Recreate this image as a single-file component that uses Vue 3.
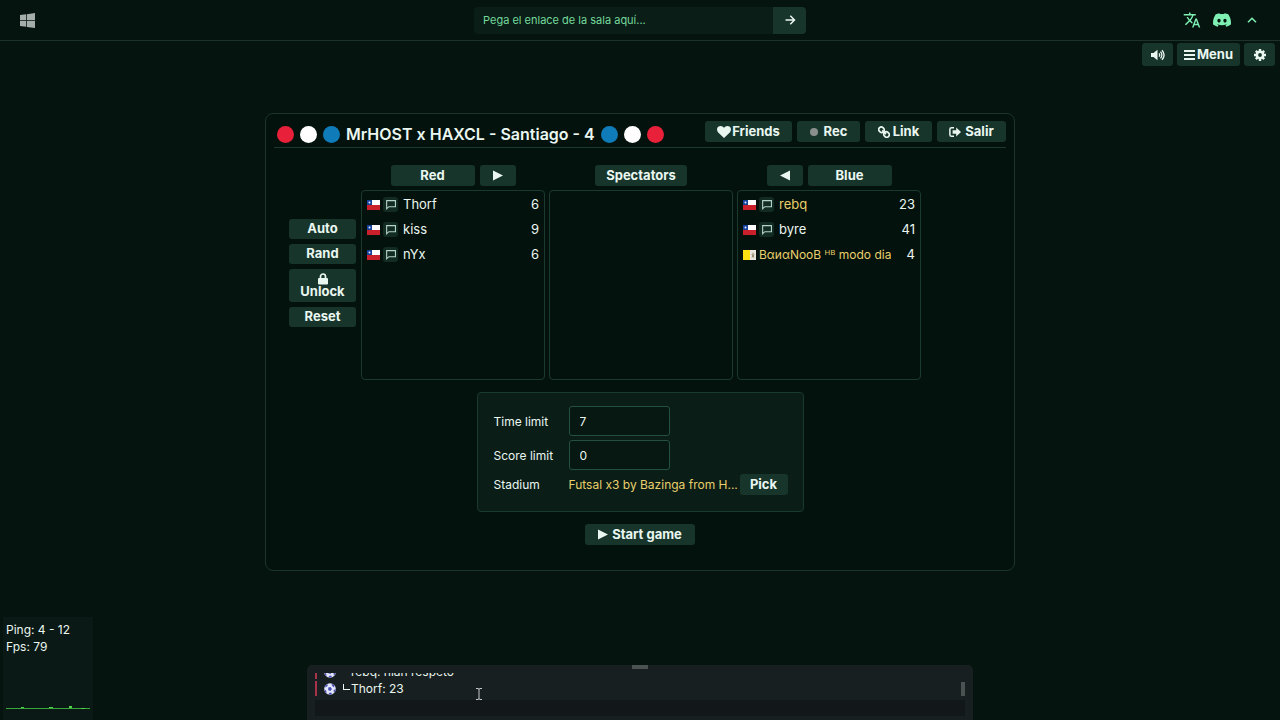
<script setup>
import { ref } from 'vue'

const roomUrl = ref('')
const timeLimit = ref('7')
const scoreLimit = ref('0')
const message = ref('')

const leftDots = ['red', 'white', 'blue']
const rightDots = ['blue', 'white', 'red']

const redTeam = [
  { name: 'Thorf', ping: 6 },
  { name: 'kiss', ping: 9 },
  { name: 'nYx', ping: 6 },
]
const blueTeam = [
  { name: 'rebq', ping: 23, admin: true },
  { name: 'byre', ping: 41 },
  { name: 'BαиαNooB ᴴᴮ modo dia', ping: 4, admin: true, vatican: true },
]
const teams = [
  { id: 'red', label: 'Red', players: redTeam },
  { id: 'spec', label: 'Spectators', players: [] },
  { id: 'blue', label: 'Blue', players: blueTeam },
]
const log = ['rebq: hian respeto', 'Thorf: 23']
</script>

<template>
  <div class="page">
    <header class="topbar">
      <div class="side">
        <svg class="windows" viewBox="0 0 16 16" aria-label="Windows">
          <path d="M0 2.2 6.6 1.3V7.6H0zM7.4 1.2 16 0V7.6H7.4zM0 8.4H6.6V14.7L0 13.8zM7.4 8.4H16V16L7.4 14.8z" />
        </svg>
      </div>
      <form class="join" @submit.prevent>
        <input v-model="roomUrl" type="text" aria-label="Enlace de la sala" placeholder="Pega el enlace de la sala aquí..." />
        <button type="submit" aria-label="Entrar">
          <svg class="ic12" viewBox="0 0 12 12"><path d="M1.5 6h9M6.3 1.8 10.5 6 6.3 10.2" fill="none" stroke="currentColor" stroke-width="1.5" /></svg>
        </button>
      </form>
      <nav class="side end">
        <button class="plain" type="button" aria-label="Idioma">
          <svg class="ic18" viewBox="0 0 24 24"><path fill="currentColor" d="m12.87 15.07-2.54-2.51.03-.03A17.52 17.52 0 0 0 14.07 6H17V4h-7V2H8v2H1v1.99h11.17C11.5 7.92 10.44 9.75 9 11.35 8.07 10.32 7.3 9.19 6.69 8h-2c.73 1.63 1.73 3.17 2.98 4.56l-5.09 5.02L4 19l5-5 3.11 3.11.76-2.04zM18.5 10h-2L12 22h2l1.12-3h4.75L21 22h2l-4.5-12zm-2.62 7 1.62-4.33L19.12 17h-3.24z" /></svg>
        </button>
        <button class="plain" type="button" aria-label="Discord">
          <svg class="ic18" viewBox="0 0 16 16"><path fill="currentColor" d="M13.545 2.907a13.2 13.2 0 0 0-3.257-1.011.05.05 0 0 0-.052.025c-.141.25-.297.577-.406.833a12.2 12.2 0 0 0-3.658 0 8 8 0 0 0-.412-.833.05.05 0 0 0-.052-.025c-1.125.194-2.22.534-3.257 1.011a.04.04 0 0 0-.021.018C.356 6.024-.213 9.047.066 12.032q.003.022.021.037a13.3 13.3 0 0 0 3.995 2.02.05.05 0 0 0 .056-.019q.463-.63.818-1.329a.05.05 0 0 0-.01-.059l-.018-.011a9 9 0 0 1-1.248-.595.05.05 0 0 1-.02-.066l.015-.019q.127-.095.248-.195a.05.05 0 0 1 .051-.007c2.619 1.196 5.454 1.196 8.041 0a.05.05 0 0 1 .053.007q.121.1.248.195a.05.05 0 0 1-.004.085 8 8 0 0 1-1.249.594.05.05 0 0 0-.03.03.05.05 0 0 0 .003.041c.24.465.515.909.817 1.329a.05.05 0 0 0 .056.019 13.2 13.2 0 0 0 4.001-2.02.05.05 0 0 0 .021-.037c.334-3.451-.559-6.449-2.366-9.106a.03.03 0 0 0-.02-.019m-8.198 7.307c-.789 0-1.438-.724-1.438-1.612s.637-1.613 1.438-1.613c.807 0 1.45.73 1.438 1.613 0 .888-.637 1.612-1.438 1.612m5.316 0c-.788 0-1.438-.724-1.438-1.612s.637-1.613 1.438-1.613c.807 0 1.451.73 1.438 1.613 0 .888-.631 1.612-1.438 1.612" /></svg>
        </button>
        <button class="plain" type="button" aria-label="Ocultar">
          <svg class="ic12" viewBox="0 0 12 12"><path d="M2 8.3 6 4.2l4 4.1" fill="none" stroke="currentColor" stroke-width="1.5" /></svg>
        </button>
      </nav>
    </header>

    <div class="toolbar">
      <button class="btn tall sound" type="button" aria-label="Sonido">
        <svg class="sound-ic" viewBox="0 0 14 12">
          <path fill="currentColor" d="M0 4h2.5L6.5.8v10.4L2.500 8H0z" />
          <path d="M8 4.300q1.400 1.700 0 3.400M9.500 2.700q2.800 3.300 0 6.600M11 1.200q4.200 4.800 0 9.600" fill="none" stroke="currentColor" stroke-width="1.300" />
        </svg>
      </button>
      <button class="btn tall menu" type="button">
        <svg class="bars" viewBox="0 0 11 12"><path fill="currentColor" d="M0 1h11v2H0zM0 5h11v2H0zM0 9h11v2H0z" /></svg>Menu
      </button>
      <button class="btn tall gear" type="button" aria-label="Ajustes">
        <svg class="ic12" viewBox="0 0 12 12">
          <path d="M6 0v12M0 6h12M1.800 1.800l8.400 8.400M10.200 1.800l-8.400 8.400" stroke="currentColor" stroke-width="2.400" />
          <circle cx="6" cy="6" r="3.200" fill="none" stroke="currentColor" stroke-width="2.400" />
          <circle cx="6" cy="6" r="1.900" fill="#17352b" />
        </svg>
      </button>
    </div>

    <main>
      <section class="room">
        <div class="room-head">
          <h1>
            <i v-for="d in leftDots" :key="d" class="dot" :class="d"></i>
            <span>MrHOST x HAXCL - Santiago - 4</span>
            <i v-for="d in rightDots" :key="d" class="dot" :class="d"></i>
          </h1>
          <div class="actions">
            <button class="btn friends" type="button">
              <svg class="heart" viewBox="0 0 14 12"><path fill="currentColor" d="M7 12 1.200 6.400C-.6 4.500-.2 1.700 1.600.6 3.400-.5 5.800.1 7 2 8.200.1 10.600-.5 12.400.6c1.800 1.100 2.200 3.900.4 5.800z" /></svg>Friends
            </button>
            <button class="btn rec" type="button"><i class="rec-dot"></i>Rec</button>
            <button class="btn link" type="button">
              <svg class="ic12" viewBox="0 0 12 12"><g fill="none" stroke="currentColor" stroke-width="1.700"><rect x="1" y=".9" width="5" height="5.600" rx="2.300" transform="rotate(-45 3.500 3.700)" /><rect x="6" y="5.700" width="5" height="5.600" rx="2.300" transform="rotate(-45 8.500 8.500)" /><path d="m4.200 4.400 3.800 3.800" /></g></svg>Link
            </button>
            <button class="btn leave" type="button">
              <svg class="ic12" viewBox="0 0 12 12"><path d="M5 1.700H2.600Q.9 1.700.9 3.300v5.400q0 1.600 1.700 1.600H5" fill="none" stroke="currentColor" stroke-width="1.500" /><path fill="currentColor" d="M3.600 4.300h3.600V1.500L12 6 7.200 10.500V7.700H3.600z" /></svg>Salir
            </button>
          </div>
        </div>

        <div class="board">
          <div class="tools">
            <button class="btn" type="button">Auto</button>
            <button class="btn" type="button">Rand</button>
            <button class="btn unlock" type="button">
              <svg class="lock" viewBox="0 0 10 12"><path d="M2.500 6V3.500a2.500 2.500 0 0 1 5 0V6" fill="none" stroke="currentColor" stroke-width="1.700" /><rect x="0" y="5" width="10" height="6.500" rx="1" fill="currentColor" /></svg>
              Unlock
            </button>
            <button class="btn" type="button">Reset</button>
          </div>
          <div class="teams">
            <div v-for="t in teams" :key="t.id" class="team">
              <div class="team-head">
                <button v-if="t.id === 'blue'" class="btn arrow" type="button" aria-label="Mover a Blue">
                  <svg class="tri" viewBox="0 0 10 10"><path fill="currentColor" d="M10 0v10L0 5z" /></svg>
                </button>
                <button class="btn name" :class="t.id" type="button">{{ t.label }}</button>
                <button v-if="t.id === 'red'" class="btn arrow" type="button" aria-label="Mover a Red">
                  <svg class="tri" viewBox="0 0 10 10"><path fill="currentColor" d="M0 0v10l10-5z" /></svg>
                </button>
              </div>
              <ul>
                <li v-for="p in t.players" :key="p.name">
                  <svg v-if="p.vatican" class="flag" viewBox="0 0 13 10"><path fill="#ffe011" d="M0 0h7v10H0z" /><path fill="#e8e6df" d="M7 0h6v10H7z" /><path d="M10 2.500v5M8.700 4.200l2.400 3.200M11.200 4.200 8.800 7.400" stroke="#8d8364" stroke-width=".9" /></svg>
                  <svg v-else class="flag" viewBox="0 0 13 10"><path fill="#fff" d="M4 0h9v5H4z" /><path fill="#14419b" d="M0 0h5v5H0z" /><path fill="#c9202b" d="M0 5h13v5H0z" /><circle cx="2.500" cy="2.500" r="1" fill="#dfe8f7" /></svg>
                  <span v-if="!p.vatican" class="bubble">
                    <svg viewBox="0 0 10 10"><path d="M1.500 1.500h8v5.500H3.500L1.500 8.800z" fill="none" stroke="#b4d3c6" stroke-width="1" /></svg>
                  </span>
                  <span class="player" :class="{ admin: p.admin, wide: p.vatican }">{{ p.name }}</span>
                  <span class="ping">{{ p.ping }}</span>
                </li>
              </ul>
            </div>
          </div>
        </div>

        <div class="settings">
          <label for="time">Time limit</label>
          <input id="time" v-model="timeLimit" type="text" />
          <label for="score">Score limit</label>
          <input id="score" v-model="scoreLimit" type="text" />
          <span class="lab">Stadium</span>
          <div class="stadium">
            <span>Futsal x3 by Bazinga from H...</span>
            <button class="btn pick" type="button">Pick</button>
          </div>
        </div>

        <button class="btn start" type="button">
          <svg class="tri" viewBox="0 0 10 10"><path fill="currentColor" d="M0 0v10l10-5z" /></svg>Start game
        </button>
      </section>
    </main>

    <footer>
      <div class="stats">
        <p>Ping: 4 - 12</p>
        <p>Fps: 79</p>
        <svg viewBox="0 0 84 6" preserveAspectRatio="none"><path fill="#37a83a" d="M0 4h84v1H0z" /><path fill="#4fd14c" d="M15 3h3v1h-3zM43 3h4v1h-4zM63 2h3v2h-3zM75 4h4v1h-4z" /></svg>
      </div>
      <div class="chat">
        <i class="grip"></i>
        <div class="log-wrap">
          <div class="log">
            <p v-for="m in log" :key="m">
              <svg class="ball" viewBox="0 0 12 12"><circle cx="6" cy="6" r="5.800" fill="#e6e9fb" /><path fill="#4a50b4" d="M4.200 4.600 6.600 4 8 6 6.500 8 4.200 7.200zM1.200 2.600 4 1.200 3.400 3.200 1.400 4.600zM7.500.6l3 1.800-.5 2L8 2.800zM.4 6.600l1.800 1 .4 2.400-1.400-.8zM4.600 10l2.600-.6.8 1.800-2.600.5zM9.600 7.200l2-1.400-.3 2.400-1.500 1.400z" /></svg>
              <span class="corner"></span>{{ m }}
            </p>
          </div>
          <i class="thumb"></i>
        </div>
        <input v-model="message" type="text" aria-label="Mensaje" />
      </div>
    </footer>

    <svg class="cursor" viewBox="0 0 6 12"><path d="M0 .5h2l1 .7 1-.7h2M0 11.500h2l1-.7 1 .7h2M3 1v10" fill="none" stroke="#c4cac9" stroke-width="1" /></svg>
  </div>
</template>

<style>
body {
  background: #05140f;
}
</style>

<style scoped>
* {
  box-sizing: border-box;
}
.page {
  position: relative;
  display: flex;
  flex-direction: column;
  height: 100vh;
  overflow: hidden;
  background: #05140f;
  color: #eaf7f1;
  font-family: Inter, "Noto Sans", sans-serif;
  font-size: 13px;
  line-height: 17px;
}
button,
input {
  font: inherit;
  color: inherit;
  border: 0;
  margin: 0;
  outline: 0;
}
svg {
  display: block;
  flex: none;
}
p,
h1,
ul {
  margin: 0;
  padding: 0;
}
.ic12 {
  width: 12px;
  height: 12px;
}
.bars {
  width: 11px;
  height: 12px;
}
.ic18 {
  width: 18px;
  height: 18px;
}
.topbar {
  display: grid;
  grid-template-columns: 1fr 332px 1fr;
  align-items: center;
  height: 41px;
  border-bottom: 1px solid #1d3229;
}
.side {
  display: flex;
  align-items: center;
  padding: 0 20px;
}
.windows {
  width: 15px;
  height: 15px;
  fill: #a5adab;
}
.end {
  justify-content: flex-end;
  gap: 12px;
  padding-right: 19px;
}
.plain {
  display: grid;
  place-items: center;
  width: 18px;
  height: 18px;
  padding: 0;
  background: none;
  color: #7ff0b4;
}
.join {
  display: flex;
  height: 27px;
  border-radius: 4px;
  overflow: hidden;
  background: #0a1d17;
}
.join input {
  flex: 1;
  min-width: 0;
  padding: 0 9px;
  background: none;
  font-size: 11px;
}
.join input::placeholder {
  color: #74d99b;
  opacity: 1;
}
.join button {
  display: grid;
  place-items: center;
  width: 33px;
  padding: 0;
  background: #17352b;
}
.btn {
  display: flex;
  align-items: center;
  justify-content: center;
  height: 21px;
  padding: 0;
  border-radius: 3px;
  background: #17352b;
  font-size: 13px;
  font-weight: 700;
  line-height: 13px;
  white-space: nowrap;
}
.toolbar {
  display: flex;
  justify-content: flex-end;
  gap: 4px;
  padding: 2px 5px 0;
}
.tall {
  height: 23px;
}
.sound,
.gear {
  width: 31px;
}
.sound-ic {
  width: 14px;
  height: 12px;
}
.menu {
  width: 63px;
  gap: 2px;
}
main {
  display: flex;
  flex: 1;
  align-items: flex-start;
  justify-content: center;
  padding-top: 47px;
}
.room {
  display: flex;
  flex-direction: column;
  align-items: center;
  width: 750px;
  max-width: 100%;
  padding: 7px 8px 25px;
  border: 1px solid #1c352b;
  border-radius: 8px;
  background: #04120d;
}
.room-head {
  display: flex;
  justify-content: space-between;
  align-self: stretch;
  height: 27px;
  border-bottom: 1px solid #1b3a2e;
}
h1 {
  display: flex;
  align-items: center;
  gap: 6px;
  padding-left: 3px;
  font-size: 16px;
  font-weight: 600;
  line-height: 20px;
  white-space: nowrap;
}
.dot {
  width: 17px;
  height: 17px;
  border-radius: 50%;
}
.dot.red {
  background: #e8203a;
}
.dot.white {
  background: #fff;
}
.dot.blue {
  background: #0f7bb8;
}
.actions {
  display: flex;
  gap: 5px;
}
.friends {
  width: 87px;
  gap: 1px;
}
.heart {
  width: 14px;
  height: 12px;
}
.rec {
  width: 63px;
  gap: 6px;
}
.rec-dot {
  width: 8px;
  height: 8px;
  border-radius: 50%;
  background: #8a8f8d;
}
.link {
  width: 67px;
  gap: 3px;
}
.leave {
  width: 69px;
  gap: 4px;
}
.board {
  display: grid;
  grid-template-columns: 1fr auto 1fr;
  align-items: center;
  align-self: stretch;
  column-gap: 5px;
  padding: 17px 0 0 2px;
}
.tools {
  display: grid;
  justify-self: end;
  width: 67px;
  gap: 5px;
}
.tools .btn {
  height: 20px;
}
.tools .unlock {
  flex-direction: column;
  height: 33px;
}
.lock {
  width: 10px;
  height: 12px;
}
.teams {
  display: flex;
  gap: 4px;
}
.team {
  width: 184px;
}
.team-head {
  display: flex;
  justify-content: center;
  gap: 5px;
  margin-bottom: 4px;
}
.name {
  width: 84px;
}
.name.spec {
  width: 92px;
}
.arrow {
  width: 36px;
}
.tri {
  width: 10px;
  height: 11px;
}
ul {
  height: 190px;
  padding: 1px 5px;
  border: 1px solid #1b3a2e;
  border-radius: 4px;
  list-style: none;
}
li {
  display: flex;
  align-items: center;
  height: 25px;
}
.flag {
  width: 13px;
  height: 10px;
}
.bubble {
  display: grid;
  place-items: center;
  width: 15px;
  height: 15px;
  margin: 0 5px 0 3px;
  border-radius: 3px;
  background: #122b23;
}
.bubble svg {
  width: 11px;
  height: 11px;
}
.player {
  flex: 1;
  min-width: 0;
  margin-right: 8px;
  overflow: hidden;
  white-space: nowrap;
}
.wide {
  margin-left: 3px;
  font-size: 12px;
}
.admin {
  color: #e9cf6c;
}
.ping {
  min-width: 16px;
  text-align: right;
}
.settings {
  display: grid;
  grid-template-columns: 75px minmax(0, 1fr);
  align-items: center;
  row-gap: 4px;
  width: 327px;
  margin-top: 12px;
  padding: 13px 15px 16px 16px;
  border: 1px solid #1b3a2e;
  border-radius: 4px;
  background: #0a1d17;
  font-size: 12px;
}
.settings input {
  width: 101px;
  height: 30px;
  padding: 0 10px;
  border: 1px solid #24503f;
  border-radius: 3px;
  background: #071812;
}
.stadium {
  display: flex;
  align-items: center;
  justify-content: space-between;
}
.stadium span {
  white-space: nowrap;
  color: #e9cf6c;
}
.pick {
  width: 48px;
}
.start {
  width: 110px;
  margin-top: 12px;
  gap: 4px;
}
footer {
  display: grid;
  grid-template-columns: 1fr 666px 1fr;
  align-items: end;
}
.stats {
  width: 90px;
  height: 103px;
  margin-left: 3px;
  padding: 4px 3px 0;
  background: #0a1915;
  font-size: 12px;
}
.stats svg {
  width: 84px;
  height: 6px;
  margin-top: 49px;
}
.chat {
  position: relative;
  padding: 8px 8px 4px;
  height: 55px;
  border-radius: 5px 5px 0 0;
  background: #181f20;
}
.grip {
  position: absolute;
  top: 0;
  left: calc(50% - 8px);
  width: 16px;
  height: 4px;
  background: #4a5352;
}
.log-wrap {
  display: flex;
  align-items: flex-end;
  height: 24px;
}
.log {
  display: flex;
  flex: 1;
  flex-direction: column;
  justify-content: flex-end;
  height: 24px;
  padding-bottom: 1px;
  overflow: hidden;
  font-size: 12px;
}
.log p {
  display: flex;
  flex: none;
  align-items: center;
  height: 15px;
  margin-top: 2px;
  padding-left: 7px;
  border-left: 2px solid #a8324a;
}
.ball {
  width: 12px;
  height: 12px;
}
.corner {
  width: 7px;
  height: 6px;
  margin: 0 1px 4px 7px;
  border-left: 1px solid #eaf7f1;
  border-bottom: 1px solid #eaf7f1;
}
.thumb {
  width: 4px;
  height: 14px;
  margin: 0 0 1px;
  background: #4a5352;
}
.chat input {
  display: block;
  width: 100%;
  height: 16px;
  margin-top: 3px;
  padding: 0 6px;
  background: #12181a;
}
.cursor {
  position: absolute;
  left: 476px;
  top: 688px;
  width: 6px;
  height: 12px;
}
</style>
